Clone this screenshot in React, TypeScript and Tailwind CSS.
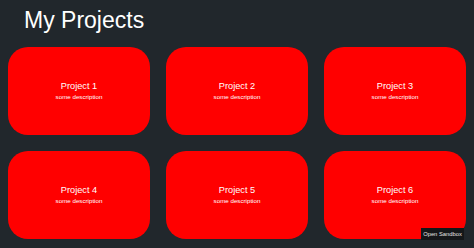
import React from "react";

const projects = [1, 2, 3, 4, 5, 6];

export default function App() {
  return (
    <div
      className="relative w-[474px] h-[248px] bg-[#21272c] overflow-hidden"
      style={{ fontFamily: '"Liberation Sans", Arial, sans-serif' }}
    >
      <h1 className="pl-[24px] pt-[6px] h-[47px] text-[23px] leading-[28px] text-white">
        My Projects
      </h1>
      <div className="grid grid-cols-3 gap-x-[16px] gap-y-[16px] px-[8px]">
        {projects.map((n) => (
          <div
            key={n}
            className="h-[88px] rounded-[20px] bg-[#ff0000] flex flex-col items-center justify-center text-white"
          >
            <div className="text-[9.2px] leading-[11px]">Project {n}</div>
            <div className="text-[6.2px] leading-[8px] mt-[1px]">some description</div>
          </div>
        ))}
      </div>
      <div className="absolute left-[421px] top-[228px] w-[43px] h-[12px] bg-[#151719] text-[#e5e5e5] text-[5.8px] leading-[12px] text-center whitespace-nowrap">
        Open Sandbox
      </div>
    </div>
  );
}
